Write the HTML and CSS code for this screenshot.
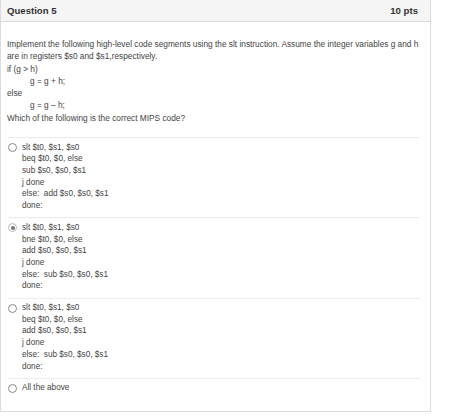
FILE: index.html
```html
<!DOCTYPE html>
<html>
<head>
<meta charset="utf-8">
<link rel="stylesheet" href="styles.css">
</head>
<body>
<div class="card">
  <div class="header">
    <span class="title">Question 5</span>
    <span class="pts">10 pts</span>
  </div>
  <div class="question">
    <div>Implement the following high-level code segments using the slt instruction. Assume the integer variables g and h are in registers $s0 and $s1,respectively.</div>
    <div>if (g &gt; h)</div>
    <div class="indent">g = g + h;</div>
    <div>else</div>
    <div class="indent">g = g – h;</div>
    <div>Which of the following is the correct MIPS code?</div>
  </div>
  <div class="answers">
    <div class="answer">
      <span class="radio"></span>
      <div class="code">
        <div>slt $t0, $s1, $s0</div>
        <div>beq $t0, $0, else</div>
        <div>sub $s0, $s0, $s1</div>
        <div>j done</div>
        <div>else:&nbsp; add $s0, $s0, $s1</div>
        <div>done:</div>
      </div>
    </div>
    <div class="answer">
      <span class="radio checked"></span>
      <div class="code">
        <div>slt $t0, $s1, $s0</div>
        <div>bne $t0, $0, else</div>
        <div>add $s0, $s0, $s1</div>
        <div>j done</div>
        <div>else:&nbsp; sub $s0, $s0, $s1</div>
        <div>done:</div>
      </div>
    </div>
    <div class="answer">
      <span class="radio"></span>
      <div class="code">
        <div>slt $t0, $s1, $s0</div>
        <div>beq $t0, $0, else</div>
        <div>add $s0, $s0, $s1</div>
        <div>j done</div>
        <div>else:&nbsp; sub $s0, $s0, $s1</div>
        <div>done:</div>
      </div>
    </div>
    <div class="answer">
      <span class="radio"></span>
      <div class="code">
        <div>All the above</div>
      </div>
    </div>
  </div>
</div>
</body>
</html>
```

FILE: styles.css
```css
html, body {
  margin: 0;
  padding: 0;
  background: #ffffff;
}
body {
  font-family: "Liberation Sans", Arial, sans-serif;
  color: #444;
}
.card {
  width: 429px;
  border: 1px solid #dcdcdc;
  border-top: none;
  padding-bottom: 12px;
}
.header {
  height: 21px;
  background: #f5f5f5;
  border-bottom: 1px solid #dddddd;
  display: flex;
  justify-content: space-between;
  align-items: center;
  padding: 0 12px 0 6px;
  font-weight: bold;
  font-size: 9.6px;
  color: #333;
}
.question {
  padding: 16px 10px 0 6px;
  font-size: 8.3px;
  line-height: 12.3px;
}
.indent {
  padding-left: 23px;
}
.answers {
  margin: 13px 10px 0 7px;
}
.answer {
  border-top: 1px solid #ececec;
  padding: 3.5px 0 5.5px 0;
  display: flex;
  align-items: flex-start;
  gap: 5px;
}
.code {
  font-size: 8.2px;
  line-height: 11.7px;
}
.radio {
  flex: none;
  width: 7px;
  height: 7px;
  margin-top: 1.5px;
  border: 1px solid #8a8a8a;
  border-radius: 50%;
  background: #fff;
  position: relative;
}
.radio.checked {
  border-color: #b9b9b9;
}
.radio.checked::after {
  content: "";
  position: absolute;
  left: 1.5px;
  top: 1.5px;
  width: 4px;
  height: 4px;
  border-radius: 50%;
  background: #777;
}
```
